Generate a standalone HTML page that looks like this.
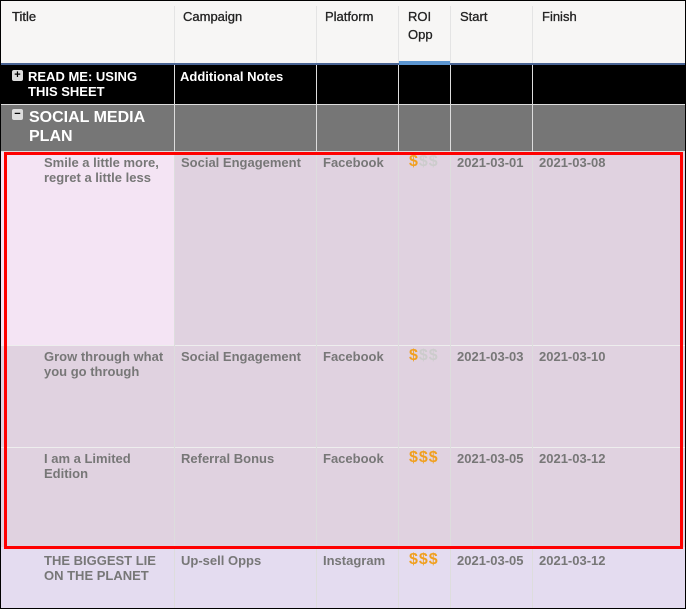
<!DOCTYPE html><html><head><style>
body{margin:0;width:686px;height:609px;overflow:hidden;background:#fff;font-family:"Liberation Sans",Arial,sans-serif;}
.w{position:absolute;left:0;top:0;width:684px;height:607px;border:1px solid #000;overflow:hidden;background:#e0d2e0}
.a{position:absolute;box-sizing:border-box}
.t{position:absolute;font-size:13px;font-weight:bold;line-height:15px;color:#777}
.h{position:absolute;font-size:13px;color:#222;line-height:18px;-webkit-text-stroke:0.3px #222}
.vl{position:absolute;width:1px;background:#e4e4e4}
.d{color:#f0a020;letter-spacing:1px;font-size:16px}
.g{color:#ccc}
</style></head><body><div class="w">
<div class="a" style="left:0;top:0;width:684px;height:62px;background:#f7f6f5"></div>
<div class="vl" style="left:173px;top:5px;height:57px"></div>
<div class="vl" style="left:315px;top:5px;height:57px"></div>
<div class="vl" style="left:397px;top:5px;height:57px"></div>
<div class="vl" style="left:449px;top:5px;height:57px"></div>
<div class="vl" style="left:531px;top:5px;height:57px"></div>
<div class="a" style="left:0;top:62px;width:684px;height:2px;background:#4a6494"></div>
<div class="a" style="left:398px;top:60px;width:51px;height:4px;background:#5b95d0"></div>
<div class="h" style="left:11px;top:7px">Title</div>
<div class="h" style="left:182px;top:7px">Campaign</div>
<div class="h" style="left:324px;top:7px">Platform</div>
<div class="h" style="left:407px;top:7px">ROI<br>Opp</div>
<div class="h" style="left:459px;top:7px">Start</div>
<div class="h" style="left:541px;top:7px">Finish</div>
<div class="a" style="left:0;top:64px;width:684px;height:39px;background:#000"></div>
<div class="a" style="left:0;top:103px;width:684px;height:47px;background:#767676;border-top:1px solid #ddd"></div>
<div class="a" style="left:0;top:150px;width:684px;height:1px;background:#ddd"></div>
<div class="a" style="left:0;top:151px;width:173px;height:193px;background:#f4e4f4"></div>
<div class="a" style="left:0;top:546px;width:684px;height:61px;background:#e4dcf0"></div>
<div class="a" style="left:0;top:344px;width:684px;height:1px;background:#eee"></div>
<div class="a" style="left:0;top:446px;width:684px;height:1px;background:#eee"></div>
<div class="vl" style="left:173px;top:64px;height:543px;background:#ddd"></div>
<div class="vl" style="left:315px;top:64px;height:543px;background:#ddd"></div>
<div class="vl" style="left:397px;top:64px;height:543px;background:#ddd"></div>
<div class="vl" style="left:449px;top:64px;height:543px;background:#ddd"></div>
<div class="vl" style="left:531px;top:64px;height:543px;background:#ddd"></div>
<div class="a" style="left:11px;top:69px;width:11px;height:11px;background:#ddd;border-radius:2px;color:#000;font:bold 11px/11px 'Liberation Sans';text-align:center">+</div>
<div class="t" style="left:27px;top:68px;color:#fff">READ ME: USING<br>THIS SHEET</div>
<div class="t" style="left:179px;top:68px;color:#fff">Additional Notes</div>
<div class="a" style="left:11px;top:108px;width:11px;height:11px;background:#ddd;border-radius:2px;color:#000;font:bold 11px/10px 'Liberation Sans';text-align:center">−</div>
<div class="t" style="left:28px;top:107px;color:#fff;font-size:16px;line-height:19px">SOCIAL MEDIA<br>PLAN</div>
<div class="t" style="left:43px;top:154px">Smile a little more,<br>regret a little less</div>
<div class="t" style="left:180px;top:154px">Social Engagement</div>
<div class="t" style="left:322px;top:154px">Facebook</div>
<div class="t d" style="left:408px;top:153px">$<span class="g">$$</span></div>
<div class="t" style="left:456px;top:154px">2021-03-01</div>
<div class="t" style="left:538px;top:154px">2021-03-08</div>
<div class="t" style="left:43px;top:348px">Grow through what<br>you go through</div>
<div class="t" style="left:180px;top:348px">Social Engagement</div>
<div class="t" style="left:322px;top:348px">Facebook</div>
<div class="t d" style="left:408px;top:347px">$<span class="g">$$</span></div>
<div class="t" style="left:456px;top:348px">2021-03-03</div>
<div class="t" style="left:538px;top:348px">2021-03-10</div>
<div class="t" style="left:43px;top:450px">I am a Limited<br>Edition</div>
<div class="t" style="left:180px;top:450px">Referral Bonus</div>
<div class="t" style="left:322px;top:450px">Facebook</div>
<div class="t d" style="left:408px;top:449px">$$$</div>
<div class="t" style="left:456px;top:450px">2021-03-05</div>
<div class="t" style="left:538px;top:450px">2021-03-12</div>
<div class="t" style="left:43px;top:552px">THE BIGGEST LIE<br>ON THE PLANET</div>
<div class="t" style="left:180px;top:552px">Up-sell Opps</div>
<div class="t" style="left:322px;top:552px">Instagram</div>
<div class="t d" style="left:408px;top:551px">$$$</div>
<div class="t" style="left:456px;top:552px">2021-03-05</div>
<div class="t" style="left:538px;top:552px">2021-03-12</div>
<div class="a" style="left:3px;top:151px;width:679px;height:397px;border:3px solid #f00"></div>
</div></body></html>
